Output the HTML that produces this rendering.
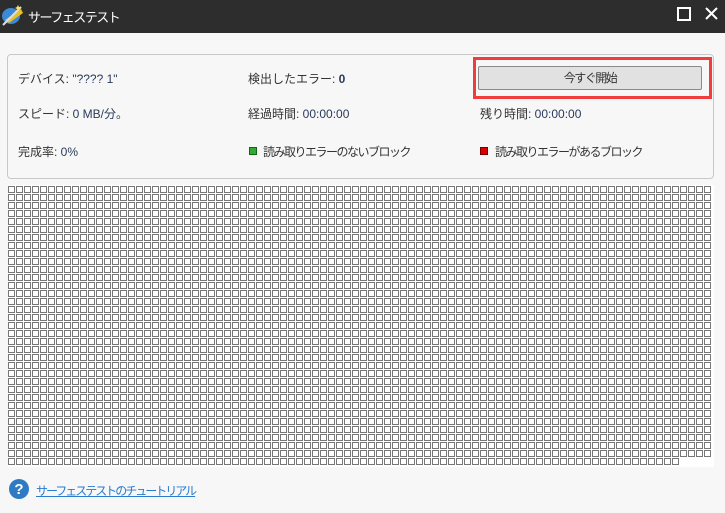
<!DOCTYPE html>
<html><head><meta charset="utf-8"><style>
body{margin:0;width:725px;height:513px;background:#f7f7f7;font-family:"Liberation Sans","Noto Sans CJK JP",sans-serif;font-size:12px;color:#333;position:relative;overflow:hidden}
.t{position:absolute;white-space:nowrap}
.v{color:#2a3a5a}
.n{letter-spacing:-1.5px}
</style></head><body>
<div style="position:absolute;left:0;top:0;width:725px;height:33px;background:#2d2d2d"></div>
<svg style="position:absolute;left:1px;top:3px" width="24" height="24" viewBox="0 0 24 24"><ellipse cx="10" cy="13" rx="9" ry="8" fill="#3a8ad8"/><path d="M4 17 L20 6 L22 10 L8 20Z" fill="#e8c020"/><path d="M2 22 L20 4" stroke="#ddd" stroke-width="2"/><path d="M17 2 l1 2 2 1-2 1-1 2-1-2-2-1 2-1z" fill="#ffe060"/></svg>
<div class="t n" style="left:28px;top:7px;color:#fff;font-size:13px">サーフェステスト</div>
<div style="position:absolute;left:677px;top:7px;width:10px;height:10px;border:2px solid #fff"></div>
<svg style="position:absolute;left:705px;top:7px" width="13" height="13"><path d="M1 1L12 12M12 1L1 12" stroke="#fff" stroke-width="2"/></svg>
<div style="position:absolute;left:7px;top:54px;width:705px;height:123px;border:1px solid #c8c8c8;border-radius:4px"></div>
<div class="t" style="left:18px;top:70px">デバイス:&nbsp;<span class="v">"???? 1"</span></div>
<div class="t" style="left:18px;top:105px">スピード:&nbsp;<span class="v">0 MB/分。</span></div>
<div class="t" style="left:18px;top:143px">完成率:&nbsp;<span class="v">0%</span></div>
<div class="t" style="left:248px;top:70px">検出したエラー:&nbsp;<b class="v">0</b></div>
<div class="t" style="left:248px;top:105px">経過時間:&nbsp;<span class="v">00:00:00</span></div>
<div style="position:absolute;left:249px;top:147px;width:6px;height:6px;background:#3a3;border:1px solid #161"></div>
<div class="t n" style="left:263px;top:143px">読み取りエラーのないブロック</div>
<div class="t" style="left:480px;top:105px">残り時間:&nbsp;<span class="v">00:00:00</span></div>
<div style="position:absolute;left:480px;top:147px;width:6px;height:6px;background:#d00;border:1px solid #700"></div>
<div class="t n" style="left:495px;top:143px">読み取りエラーがあるブロック</div>
<div style="position:absolute;left:473px;top:57px;width:233px;height:36px;border:3px solid #f03c3c"></div>
<div class="n" style="position:absolute;left:478px;top:66px;width:222px;height:22px;background:#e1e1e1;border:1px solid #8a8a8a;border-radius:2px;text-align:center;line-height:22px">今すぐ開始</div>
<svg style="position:absolute;left:8px;top:185px" width="706" height="282">
<defs><pattern id="p" width="8" height="8" patternUnits="userSpaceOnUse"><rect x="0.5" y="0.5" width="6" height="6" fill="none" stroke="#777"/></pattern></defs>
<rect width="706" height="282" fill="#fff"/>
<g transform="translate(0,1)">
<rect width="704" height="272" fill="url(#p)"/>
<rect y="272" width="672" height="8" fill="url(#p)"/>
</g>
</svg>
<svg style="position:absolute;left:8px;top:478px" width="22" height="22"><circle cx="11" cy="11" r="10" fill="#2e7bc4"/><text x="11" y="16" font-size="15" font-weight="bold" fill="#fff" text-anchor="middle" font-family="Liberation Sans">?</text></svg>
<div class="t" style="left:36px;top:482px;color:#2a7ad0;text-decoration:underline;letter-spacing:-2px">サーフェステストのチュートリアル</div>
</body></html>
